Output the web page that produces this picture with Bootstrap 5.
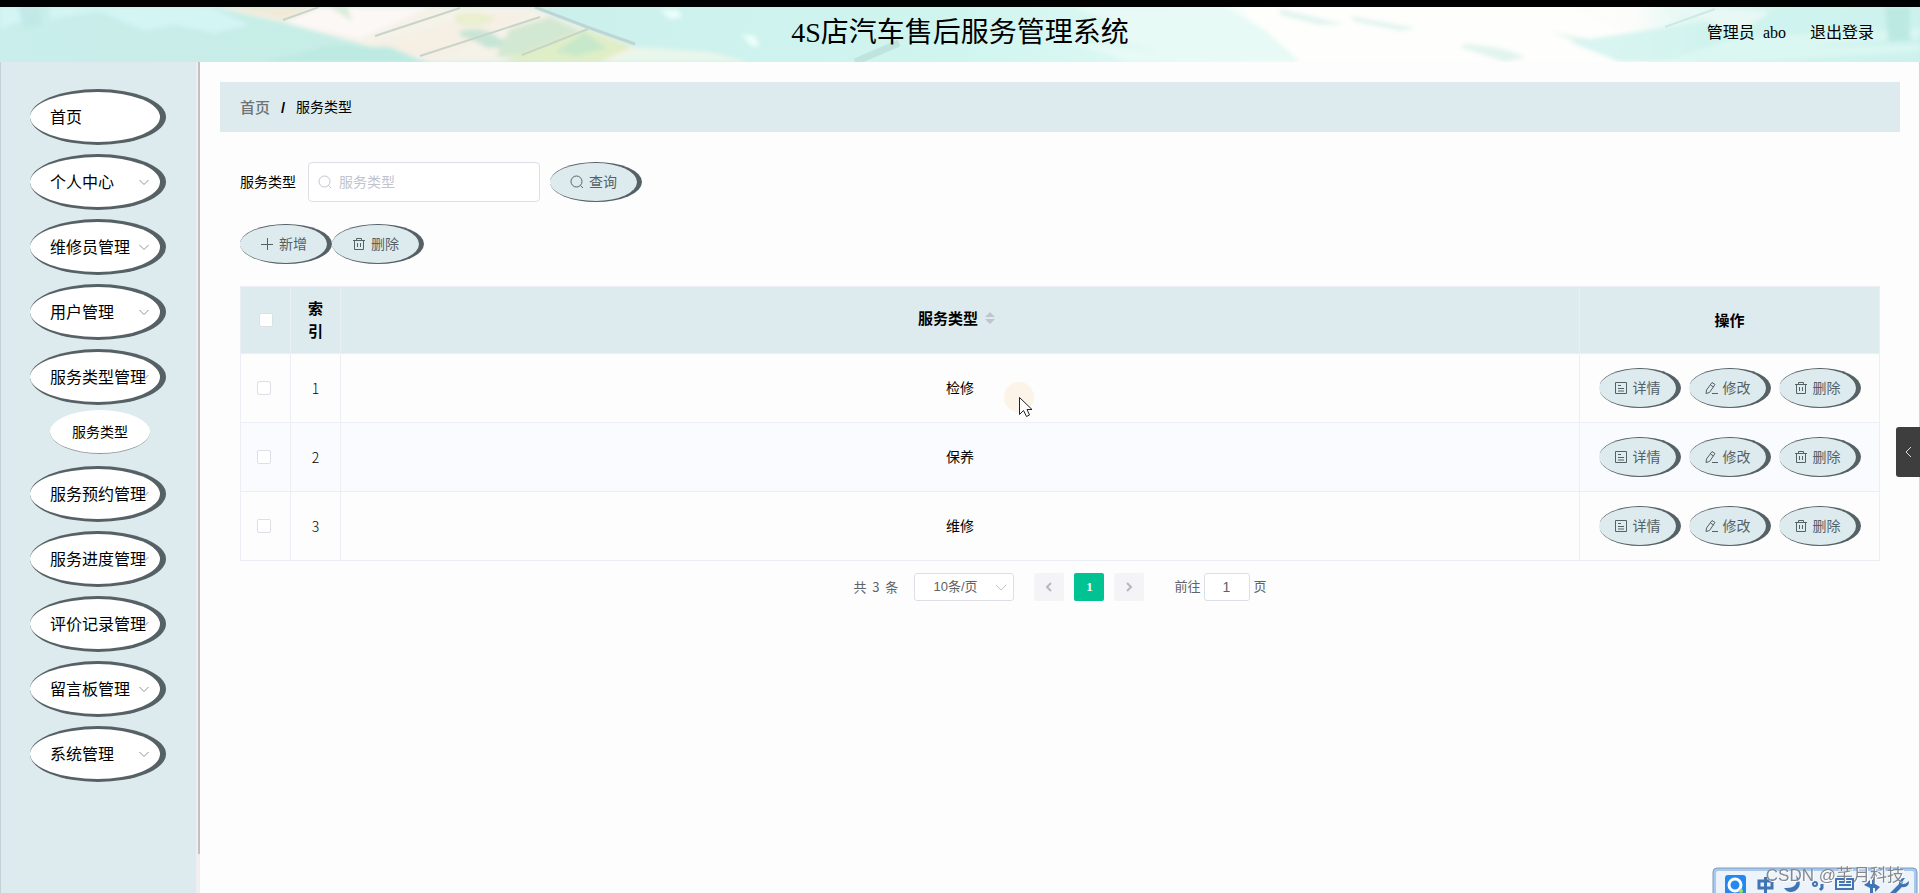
<!DOCTYPE html>
<html lang="zh-CN">
<head>
<meta charset="utf-8">
<meta name="viewport" content="width=device-width, initial-scale=1">
<title>4S店汽车售后服务管理系统</title>
<link href="https://cdn.jsdelivr.net/npm/bootstrap@5.3.0/dist/css/bootstrap.min.css" rel="stylesheet">
<style>
:root { --pale: #ddebee; --slate: #566166; --line: #ebeef5; --ctl: #dcdfe6; }
body { font-family: "Liberation Sans", "Noto Sans CJK SC", sans-serif; font-size: 14px; line-height: 23px; color: #000; background: #fdfdfd; overflow: hidden; }
.page { border-top: 7px solid #000; }
.topbar { height: 55px; background: #d3f3ee; font-family: "Liberation Serif", "Noto Sans CJK SC", serif; overflow: hidden; }
.topbar .art { width: 100%; height: 100%; }
.topbar h1 { font-size: 28px; line-height: 40px; font-weight: 400; padding-top: 6px; }
.topbar .user { font-size: 16px; line-height: 24px; right: 46px; padding-top: 14px; }
.topbar a { color: #000; text-decoration: none; }
.side { background: var(--pale); border-left: 1px solid #c3d2d8; padding: 27px 30px 0 29px; flex: none; }
.rail { width: 4px; background: #f1eef1; }
.rail .thumb { height: 95.3%; width: 2px; margin-left: 2px; background: #c1c1c1; }
.menu-btn { width: 136px; height: 56px; margin-bottom: 9px; padding: 1px 16px 0 20px; border: solid var(--slate); border-width: 3px 6px 3px 0; border-radius: 50%; background: #fff; color: #000; font-size: 16px; line-height: 24px; text-align: left; white-space: nowrap; position: relative; display: block; }
.menu-btn svg { position: absolute; right: 10px; top: 19px; width: 12px; height: 12px; stroke: #909399; fill: none; }
.sub-btn { display: block; width: 100px; height: 44px; margin: -4px 0 12px 20px; border-radius: 50%; background: #fff; border-bottom: 1px solid #8b9599; color: #000; line-height: 44px; text-align: center; text-decoration: none; }
.main { padding: 20px 20px 0; }
.crumbs { background: var(--pale); height: 50px; padding: 0 20px; }
.crumbs a { color: #6f7376; text-decoration: none; font-size: 15px; font-weight: 500; }
.crumbs .sep { width: 26px; text-align: center; font-weight: 700; font-size: 15px; }
.body-pad { padding: 30px 20px 0; }
.search { width: 232px; position: relative; margin-right: 10px; }
.search input { height: 40px; font-size: 14px; border-color: var(--ctl); border-radius: 4px; padding: 0 15px 0 30px; }
.search input::placeholder { color: #c0c4cc; }
.search svg { position: absolute; left: 10px; top: 13px; color: #c0c4cc; }
.tools { margin-top: 22px; }
.oval { height: 40px; width: 92px; padding: 0; border: solid var(--slate); border-width: 1px 5px 1px 0; border-radius: 50%; background: var(--pale); color: var(--slate); font-size: 14px; line-height: 20px; display: inline-flex; align-items: center; justify-content: center; gap: 5px; }
.oval-sm { width: 82px; }
.ico { width: 14px; height: 14px; stroke: currentColor; fill: none; stroke-width: 1; flex: none; }
.grid { table-layout: fixed; border: 1px solid var(--line); margin: 22px 0 0; width: 100%; border-collapse: collapse; }
.grid th, .grid td { border: 1px solid var(--line); text-align: center; padding: 0; vertical-align: middle; }
.grid th { background: var(--pale); height: 67px; font-size: 15px; font-weight: 700; }
.grid td { height: 69px; }
.grid tbody tr:nth-child(even) { background: #fafbfe; }
.grid .num { font-family: "Noto Sans CJK SC", sans-serif; font-weight: 300; }
.grid input { width: 14px; height: 14px; appearance: none; border: 1px solid var(--ctl); border-radius: 2px; background: #fff; display: block; margin: 0 auto 0 16px; }
.grid th input { margin-left: 18px; }
.sorter { width: 24px; height: 14px; fill: #c0c4cc; display: block; }
.pager { font-size: 13px; line-height: 28px; color: #606266; margin-top: 12px; }
.pager .total { font-family: "Noto Sans CJK SC", sans-serif; width: 61px; white-space: pre; }
.pager .form-select { width: 100px; height: 28px; font-size: 13px; color: #606266; border: 1px solid var(--ctl); border-radius: 3px; padding: 0 12px 0 18px; line-height: 20px; background-position: right 6px center; background-size: 12px; background-image: url("data:image/svg+xml,%3csvg xmlns='http://www.w3.org/2000/svg' viewBox='0 0 12 12'%3e%3cpath fill='none' stroke='%23c0c4cc' d='M1 4l5 5 5-5'/%3e%3c/svg%3e"); }
.pager .steps { gap: 10px; margin: 0 30px 0 20px; }
.pager button { width: 30px; height: 28px; border: 0; border-radius: 2px; background: #f4f4f7; color: #b4b8c0; padding: 0; display: flex; align-items: center; justify-content: center; }
.pager button .ico { stroke-width: 2; }
.pager .now { background: #00c292; color: #fff; font: 700 13px/28px "Liberation Serif", serif; }
.pager input { width: 46px; height: 28px; border: 1px solid var(--ctl); border-radius: 3px; text-align: center; font-size: 14px; padding: 0; color: #606266; margin: 0 4px 0 3px; }
.drawer { position: fixed; right: 0; top: 427px; width: 24px; height: 50px; background: #3e3e3e; border: 0; border-radius: 3px 0 0 3px; padding: 0; display: flex; align-items: center; justify-content: center; }
.edge { position: fixed; right: 0; top: 62px; bottom: 0; width: 1px; background: #d5d5d8; }
.pointer { position: fixed; left: 1004px; top: 381px; width: 32px; height: 36px; }
.ime { position: fixed; right: 2px; bottom: -8px; width: 206px; height: 34px; }
.stamp { position: fixed; right: 16px; bottom: 4px; font-size: 17px; line-height: 26px; color: #85888d; text-shadow: 1px 1px 0 #fff; white-space: nowrap; }
</style>
</head>
<body>
<div class="page min-vh-100 d-flex flex-column">
  <header class="topbar position-relative d-flex justify-content-center">
    <svg class="art position-absolute top-0 start-0" viewBox="0 0 1920 55" preserveAspectRatio="none" aria-hidden="true">
      <defs>
        <linearGradient id="g1"><stop offset="0" stop-color="#c9eeeb"/><stop offset=".2" stop-color="#c7ede6"/><stop offset=".33" stop-color="#cdf1ed"/><stop offset=".5" stop-color="#d0f5ef"/><stop offset=".6" stop-color="#def8f3"/><stop offset=".66" stop-color="#fdfefd"/><stop offset=".85" stop-color="#fcfdfb"/><stop offset=".89" stop-color="#daf5ef"/><stop offset="1" stop-color="#caf2ed"/></linearGradient>
        <filter id="soft"><feGaussianBlur stdDeviation="2"/></filter>
      </defs>
      <rect width="1920" height="55" fill="url(#g1)"/>
      <g filter="url(#soft)">
        <path d="M0 0h18l4 14-22 8zM50 0h160l40 18-35 8-40-8-30 6-45-20-50 8z" fill="#d3f5f4"/>
        <path d="M18 0h22l2 18-18 4z" fill="#c2e9e7"/>
        <path d="M215 0H530L640 42 610 55H425L285 16z" fill="#f5f2e8"/>
        <path d="M225 0h90l-32 13z" fill="#f1ead8"/>
        <path d="M320 0h110l-70 32-74-16z" fill="#fbf8f5"/>
        <path d="M330 0l22 14-5-14z" fill="#dcebd8"/>
        <path d="M370 38l120-32 40 0-90 46z" fill="#f5efe4"/>
        <path d="M455 8q20-6 40 3l-8 6q-25 4-32-2z" fill="#e9efcf"/>
        <path d="M460 24q25-6 40 8 14-2 12 9h-25q-12-8-27-12z" fill="#c7e5d6"/>
        <path d="M510 22l40-12 32 14-50 24-36 2z" fill="#d3e8d2"/>
        <path d="M500 55l85-33 47 18-32 15z" fill="#e0eec6"/>
        <path d="M555 45l30-20 22 16-30 8z" fill="#c8e8cc"/>
        <path d="M260 55l65-15h65l35 15zM320 40q30-8 110 15h-90z" fill="#bdeae2"/>
        <path d="M640 40l70 5 40 10H610z" fill="#e9f6eb"/>
        <path d="M660 3h18l4 7-12 2zM742 28h12l6 10-8 2z" fill="#ebfffa"/>
        <path d="M1075 0h150l95 55h-190l-60-20 90 10-110-30 80 8z" fill="#e7faf5"/>
        <path d="M1240 0h330l60 30-20 25h-310z" fill="#fefefd"/>
        <path d="M1280 2l65 15-25 1-40-10zM1350 9l66 12-15 3-45-9z" fill="#e1f4ef"/>
        <path d="M1465 37q45 3 60 14l-20 4-45-15zM1550 25l40 7-10 4z" fill="#e2f4ee"/>
        <path d="M1570 35l130-20 90-15h130v55h-300z" fill="#cef3ed" opacity=".8"/>
        <path d="M1770 5l-30 20-80-25h50z" fill="#e8f8f4"/>
        <path d="M1660 55l80-25 180-8v8l-120 10 120-2v6l-160 10z" fill="#dbf7f2"/>
        <path d="M1885 0h25v34h-22z" fill="#bde9e3"/>
      </g>
      <g fill="none" stroke="#c8d4ca" stroke-width="2">
        <path d="M283 13l36-13M375 29l85-28M420 49l120-39M522 48l66-26" />
        <path d="M535 0l52 20 48 17" stroke="#bdd5d4" stroke-width="3"/>
        <path d="M855 55l44-19" stroke="#bfe3dd" stroke-width="7"/>
        <path d="M1665 20l50-18" stroke="#cce9e3"/>
      </g>
    </svg>
    <h1 class="position-relative m-0">4S店汽车售后服务管理系统</h1>
    <div class="user position-absolute d-flex align-items-center top-0">
      <span class="me-2">管理员</span><span class="me-4">abo</span><a href="#">退出登录</a>
    </div>
  </header>

  <div class="d-flex flex-grow-1">
    <div class="d-flex flex-shrink-0">
      <nav class="side" aria-label="菜单" id="menu"></nav>
      <div class="rail"><div class="thumb"></div></div>
    </div>

    <main class="main flex-grow-1">
      <nav class="crumbs d-flex align-items-center" aria-label="breadcrumb">
        <a href="#">首页</a><span class="sep">/</span><span>服务类型</span>
      </nav>
      <div class="body-pad">
        <form class="d-flex align-items-center" onsubmit="return false">
          <label for="kind" class="me-2 pe-1">服务类型</label>
          <div class="search">
            <svg class="ico" viewBox="0 0 14 14"><circle cx="6.500" cy="6.500" r="5.500"/><path d="M10.500 10.500l2.500 2.500"/></svg>
            <input id="kind" type="text" class="form-control" placeholder="服务类型">
          </div>
          <button type="submit" class="oval"><svg class="ico" viewBox="0 0 14 14"><circle cx="6.500" cy="6.500" r="5.500"/><path d="M10.500 10.500l2.500 2.500"/></svg>查询</button>
        </form>
        <div class="tools d-flex">
          <button type="button" class="oval"><svg class="ico" viewBox="0 0 14 14"><path d="M1 7.500h12M7.500 1v12"/></svg>新增</button>
          <button type="button" class="oval"><svg class="ico" viewBox="0 0 14 14"><path d="M1 3.500h12M2.500 3.500v9h9v-9M4.500 3V1.500h5V3M5.500 6v4M8.500 6v4"/></svg>删除</button>
        </div>
        <table class="grid">
          <colgroup><col style="width:50px"><col style="width:50px"><col><col style="width:300px"></colgroup>
          <thead><tr>
            <th><input type="checkbox" aria-label="全选"></th>
            <th><span class="d-block px-3">索引</span></th>
            <th><span class="d-flex justify-content-center align-items-center pb-1">服务类型<svg class="sorter" viewBox="0 0 24 14"><path d="M7 6l5-5 5 5zM7 8h10l-5 5z"/></svg></span></th>
            <th>操作</th>
          </tr></thead>
          <tbody id="rows"></tbody>
        </table>
        <div class="pager d-flex justify-content-center align-items-center">
          <span class="total">共  3  条</span>
          <select class="form-select" aria-label="每页条数"><option>10条/页</option></select>
          <div class="steps d-flex">
            <button type="button" aria-label="上一页"><svg class="ico" viewBox="0 0 14 14"><path d="M9 3L5 7l4 4"/></svg></button>
            <button type="button" class="now">1</button>
            <button type="button" aria-label="下一页"><svg class="ico" viewBox="0 0 14 14"><path d="M5 3l4 4-4 4"/></svg></button>
          </div>
          <label for="goto">前往</label>
          <input id="goto" type="text" value="1"><span>页</span>
        </div>
      </div>
    </main>
  </div>
</div>

<div class="edge"></div>
<button type="button" class="drawer" aria-label="展开"><svg width="8" height="12" viewBox="0 0 8 12" fill="none" stroke="#ddd"><path d="M7 1L2 6l5 5"/></svg></button>
<svg class="pointer" viewBox="0 0 32 36" aria-hidden="true"><circle cx="15" cy="16" r="15" fill="#fcf4e8"/><path d="M15.500 16.500v17l4-4 3 6 3-1.500-2.500-5.500h5z" fill="#fff" stroke="#222"/></svg>
<svg class="ime" viewBox="0 0 206 34" aria-hidden="true">
  <rect x="1" y="1" width="204" height="40" rx="4" fill="#a9c8ea" stroke="#7d9dc4"/>
  <rect x="4" y="4" width="198" height="40" rx="2" fill="#edf3fb"/>
  <rect x="13" y="8" width="21" height="26" rx="3" fill="#2488ef"/><circle cx="23" cy="18" r="6" fill="none" stroke="#fff" stroke-width="3"/><circle cx="29" cy="24" r="2" fill="#a4e34a"/>
  <g fill="none" stroke="#3f74b5" stroke-width="2"><path d="M47 14h13v7H47zM53.500 10v18" stroke-width="3"/><circle cx="103" cy="17" r="2"/><path d="M110 17v4l-2 2" stroke-width="3"/><path d="M124 12h17v10h-17zM127 15h12M127 18h12"/></g>
  <path d="M84 8q4 14-12 13 4 6 11 3 9-6 1-16zM178 26l9-9q-1-7 6-6l-3 4 3 2 4-3q0 7-7 6l-8 8zM152 18l6-5v4h2v-7h3v7l5 3-5 5v-4h-2v7h-3v-7z" fill="#3f74b5"/>
</svg>
<div class="stamp">CSDN @芊月科技</div>

<script>
const menu = ['首页', '个人中心', '维修员管理', '用户管理', '服务类型管理', '服务预约管理', '服务进度管理', '评价记录管理', '留言板管理', '系统管理'];
document.getElementById('menu').innerHTML = menu.map((t, i) =>
  `<button type="button" class="menu-btn">${i ? '<svg viewBox="0 0 12 12"><path d="M1.500 4L6 8.500 10.500 4"/></svg>' : ''}<span class="position-relative">${t}</span></button>` +
  (i === 4 ? '<a href="#" class="sub-btn">服务类型</a>' : '')).join('');
const icons = {
  '详情': '<path d="M1.500 1.500h11v11h-11zM4 4.500h3M4 7.500h6M4 10h6"/>',
  '修改': '<path d="M8 1.500l3 2-5.500 8-3.500 1 .5-3.500zM6.500 4l3 2M8 12.500h6"/>',
  '删除': '<path d="M1 3.500h12M2.500 3.500v9h9v-9M4.500 3V1.500h5V3M5.500 6v4M8.500 6v4"/>'
};
const acts = Object.keys(icons).map(t => `<button type="button" class="oval oval-sm"><svg class="ico" viewBox="0 0 14 14">${icons[t]}</svg>${t}</button>`).join('');
document.getElementById('rows').innerHTML = ['检修', '保养', '维修'].map((t, i) =>
  `<tr><td><input type="checkbox" aria-label="选择${t}"></td><td class="num">${i + 1}</td><td>${t}</td><td><div class="d-flex justify-content-center gap-2">${acts}</div></td></tr>`).join('');
</script>
<script src="https://cdn.jsdelivr.net/npm/bootstrap@5.3.0/dist/js/bootstrap.bundle.min.js"></script>
</body>
</html>
